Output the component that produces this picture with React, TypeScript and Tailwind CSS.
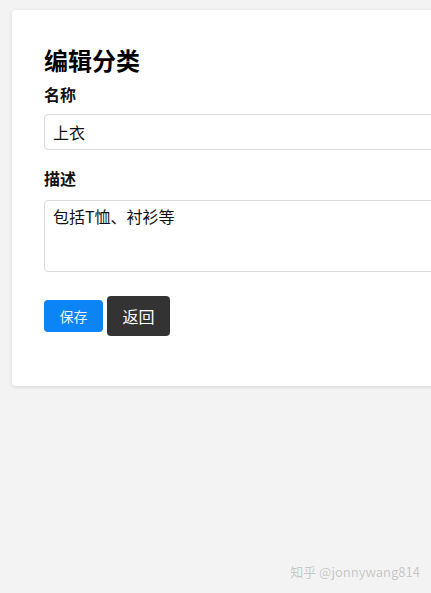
import React from "react";

export default function App() {
  return (
    <div
      className="relative min-h-screen w-full overflow-hidden bg-[#f3f3f3]"
      style={{ fontFamily: '"Noto Sans CJK SC", "Liberation Sans", sans-serif' }}
    >
      <div className="pl-3 pt-[10px]">
        <div className="w-[640px] rounded-[4px] bg-white px-8 pb-[50px] pt-[35px] shadow-[0_1px_4px_rgba(0,0,0,0.12)]">
          <h2 className="mb-2 text-[24px] font-bold leading-[29px] text-black">编辑分类</h2>
          <label className="mb-2 block text-[16px] font-bold leading-6 text-[#111]">名称</label>
          <input
            className="block h-[36px] w-full rounded-[4px] border border-[#d9d9d9] bg-white px-2 text-[16px] text-[#111] outline-none"
            defaultValue="上衣"
          />
          <label className="mb-[10px] mt-4 block text-[16px] font-bold leading-6 text-[#111]">描述</label>
          <textarea
            className="block h-[72px] w-full resize-none rounded-[4px] border border-[#d9d9d9] bg-white px-2 py-[5px] text-[16px] leading-5 text-[#111] outline-none"
            defaultValue="包括T恤、衬衫等"
          />
          <div className="mt-6 flex items-center gap-1">
            <button className="h-[32px] w-[59px] rounded-[4px] bg-[#0b84f5] text-[14px] text-[#e8f3ff]">保存</button>
            <button className="h-[40px] w-[63px] rounded-[4px] bg-[#333333] text-[16px] text-white">返回</button>
          </div>
        </div>
      </div>
      <div
        className="absolute bottom-[12px] right-[11px] text-[13px] text-[#c4c4c4]"
        style={{ textShadow: "0 0 1px #fff, 0 0 1px #fff" }}
      >
        知乎 @jonnywang814
      </div>
    </div>
  );
}
